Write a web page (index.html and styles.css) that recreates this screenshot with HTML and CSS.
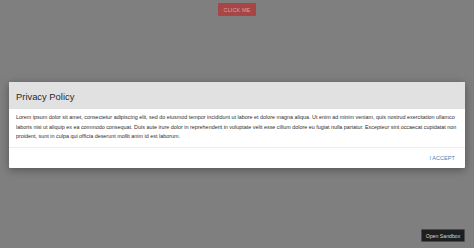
FILE: index.html
```html
<!DOCTYPE html>
<html>
<head>
<meta charset="utf-8">
<link rel="stylesheet" href="styles.css">
</head>
<body>
<div class="page">
  <div class="top"><button class="click">CLICK ME</button></div>
  <div class="modal">
    <div class="modal-header"><h2 class="title">Privacy Policy</h2></div>
    <div class="modal-body">
      <p class="text">Lorem ipsum dolor sit amet, consectetur adipiscing elit, sed do eiusmod tempor incididunt ut labore et dolore magna aliqua. Ut enim ad minim veniam, quis nostrud exercitation ullamco laboris nisi ut aliquip ex ea commodo consequat. Duis aute irure dolor in reprehenderit in voluptate velit esse cillum dolore eu fugiat nulla pariatur. Excepteur sint occaecat cupidatat non proident, sunt in culpa qui officia deserunt mollit anim id est laborum.</p>
    </div>
    <div class="modal-footer"><button class="accept">I ACCEPT</button></div>
  </div>
</div>
<button class="sandbox">Open Sandbox</button>
</body>
</html>
```
FILE: styles.css
```css
html, body {
  margin: 0;
  padding: 0;
}
body {
  width: 474px;
  height: 248px;
  background: #7f7f7f;
  font-family: "Liberation Sans", Arial, sans-serif;
  overflow: hidden;
}
.page {
  display: flex;
  flex-direction: column;
}
.top {
  display: flex;
  justify-content: center;
  padding-top: 3px;
}
.click {
  width: 38px;
  height: 13px;
  margin: 0;
  padding: 0;
  border: none;
  border-radius: 1px;
  background: #a84646;
  color: #d8a0a0;
  font-family: "Liberation Sans", Arial, sans-serif;
  font-size: 5.5px;
  letter-spacing: 0.1px;
}
.modal {
  margin: 66px 9px 0 9px;
  background: #ffffff;
  border-radius: 1px;
  box-shadow: 0 2px 8px rgba(0,0,0,0.35);
  display: flex;
  flex-direction: column;
}
.modal-header {
  height: 27px;
  background: #e1e1e1;
  display: flex;
  align-items: center;
  padding: 0 7px;
  border-radius: 1px 1px 0 0;
}
.title {
  margin: 2px 0 0 0;
  font-size: 9.4px;
  font-weight: normal;
  color: #2a2a2a;
}
.modal-body {
  padding: 4px 7px 5px 7px;
  border-bottom: 1px solid #ececec;
}
.text {
  margin: 0;
  font-size: 5.42px;
  line-height: 9.5px;
  color: #2e2e2e;
}
.modal-footer {
  height: 20px;
  display: flex;
  justify-content: flex-end;
  align-items: center;
  padding: 0 10px;
}
.accept {
  border: none;
  background: transparent;
  padding: 0;
  margin: 0;
  color: #4a86c0;
  font-family: "Liberation Sans", Arial, sans-serif;
  font-size: 5.6px;
}
.sandbox {
  position: fixed;
  right: 9px;
  bottom: 6px;
  width: 44px;
  height: 13px;
  margin: 0;
  padding: 0;
  background: #1e1e1e;
  border: 1px solid #4a4a4a;
  border-radius: 1px;
  color: #d8d8d8;
  font-family: "Liberation Sans", Arial, sans-serif;
  font-size: 5.2px;
}
```
